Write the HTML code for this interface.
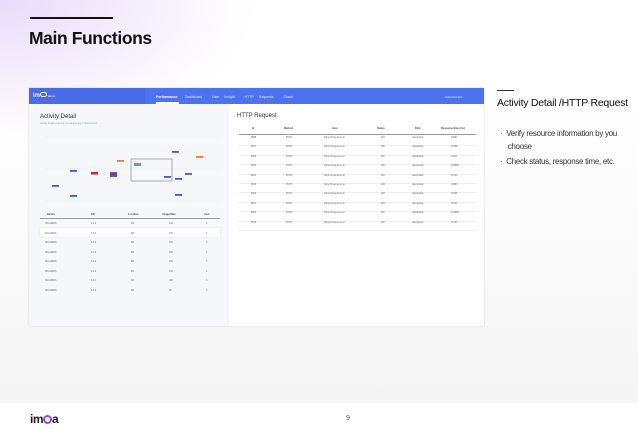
<!DOCTYPE html>
<html><head><meta charset="utf-8"><style>
*{margin:0;padding:0;box-sizing:border-box}
body{width:638px;height:442px;overflow:hidden;font-family:"Liberation Sans",sans-serif;position:relative;background:linear-gradient(#fff 0,#fff 100px,#f5f5f6 400px);}
.grad{position:absolute;left:0;top:0;width:260px;height:140px;background:radial-gradient(ellipse at 0 0,rgba(215,190,245,.55),rgba(255,255,255,0) 70%)}
.footer{position:absolute;left:0;top:403px;width:638px;height:39px;background:#fff}
.abs{position:absolute}
</style></head><body>
<div class="grad"></div>
<div class="abs" style="left:30px;top:17px;width:83px;height:2px;background:#111"></div>
<div class="abs" style="left:29px;top:28px;font-size:17.5px;font-weight:bold;color:#111;letter-spacing:-.4px">Main Functions</div>

<div class="abs" style="left:29px;top:88px;width:455px;height:238px;background:#fff;box-shadow:0 0 2px rgba(0,0,0,.15)">
 <div class="abs" style="left:0;top:0;width:455px;height:16px;background:#4d72ee"></div>
 <div class="abs" style="left:0;top:0;width:116px;height:16px;background:#4a6be6"></div>
 <div class="abs" style="left:4px;top:4px;font-size:6px;font-weight:bold;color:#fff">im<span style="display:inline-block;width:7px;height:5px;border:1.5px solid #fff;border-radius:3px"></span><span style="font-size:3px;font-weight:normal"> demo</span></div>
 <div class="abs" style="left:127px;top:7px;font-size:3.5px;color:#fff;font-weight:bold">Performance</div>
 <div class="abs" style="left:127px;top:14px;width:23px;height:1.5px;background:#fff"></div>
 <div class="abs" style="left:156px;top:7px;font-size:3.5px;color:#dfe6ff;word-spacing:4px">Dashboard&nbsp; User&nbsp;Insight&nbsp; HTTP&nbsp;Requests&nbsp; Crash</div>
 <div class="abs" style="left:416px;top:7px;font-size:3px;color:#dfe6ff">Administrator</div>
 <div class="abs" style="left:0;top:16px;width:200px;height:222px;background:#f5f7fb"></div>
 <div class="abs" style="left:11px;top:26px;font-size:6px;color:#333">Activity Detail</div>
 <div class="abs" style="left:11px;top:35px;font-size:2.3px;color:#7a9ae8">Activity Detail rendering of a sample app (7 devices/min)</div>
 <div class="abs" style="left:208px;top:25px;font-size:6px;color:#333">HTTP Request</div>
 <svg class="abs" style="left:10px;top:45px" width="182" height="75">
  <g stroke="#e6e9f0" stroke-width=".4"><line x1="5" y1="4" x2="180" y2="4"/><line x1="5" y1="36" x2="180" y2="36"/><line x1="5" y1="68" x2="180" y2="68"/></g>
  <rect x="13" y="52" width="7" height="1.8" fill="#3b5ce6"/>
  <rect x="31" y="37" width="7" height="1.8" fill="#3b5ce6"/>
  <rect x="31" y="62" width="7" height="1.8" fill="#3b5ce6"/>
  <rect x="52" y="39" width="7" height="2.5" fill="#e62020"/>
  <rect x="71" y="39" width="7" height="5" fill="#3b5ce6"/><rect x="71" y="40" width="7" height="1.8" fill="#e62020"/>
  <rect x="78" y="27" width="7" height="1.8" fill="#f07a3a"/>
  <rect x="95" y="30" width="7" height="3" fill="#6d8df0"/>
  <rect x="92" y="26" width="41" height="22" fill="none" stroke="#777" stroke-width=".6"/>
  <rect x="125" y="43" width="7" height="1.8" fill="#3b5ce6"/>
  <rect x="133" y="18" width="7" height="1.8" fill="#3b5ce6"/>
  <rect x="136" y="45" width="7" height="1.8" fill="#3b5ce6"/>
  <rect x="146" y="40" width="7" height="1.8" fill="#3b5ce6"/>
  <rect x="136" y="61" width="7" height="1.8" fill="#3b5ce6"/>
  <rect x="157" y="23" width="7" height="1.8" fill="#f07a3a"/>
 </svg>
 <div class="abs" style="left:11px;top:130px;width:180px;height:.6px;background:#999"></div>
 <div class="abs" style="left:11px;top:140px;width:180px;height:9px;background:#fff;box-shadow:0 0 2px rgba(0,0,0,.1)"></div>
 <div class="abs" style="left:0;top:125px;width:200px;font-size:2.5px;font-weight:bold;color:#444">
  <span class="abs" style="left:18px">Device</span><span class="abs" style="left:62px">OS</span><span class="abs" style="left:99px">Location</span><span class="abs" style="left:133px">Usage Rate</span><span class="abs" style="left:175px">User</span></div>
 <div class="abs" style="left:0;top:0;width:200px;font-size:2.3px;color:#666">
  <div class="abs" style="top:135px;width:200px"><span class="abs" style="left:16px">SM-G960S</span><span class="abs" style="left:62px">4.4.2</span><span class="abs" style="left:102px">KR</span><span class="abs" style="left:140px">100</span><span class="abs" style="left:177px">3</span></div>
  <div class="abs" style="top:144.5px;width:200px"><span class="abs" style="left:16px">SM-G960S</span><span class="abs" style="left:62px">4.4.2</span><span class="abs" style="left:102px">KR</span><span class="abs" style="left:140px">100</span><span class="abs" style="left:177px">3</span></div>
  <div class="abs" style="top:154px;width:200px"><span class="abs" style="left:16px">SM-G960S</span><span class="abs" style="left:62px">4.4.2</span><span class="abs" style="left:102px">KR</span><span class="abs" style="left:140px">100</span><span class="abs" style="left:177px">3</span></div>
  <div class="abs" style="top:163.5px;width:200px"><span class="abs" style="left:16px">SM-G960S</span><span class="abs" style="left:62px">4.4.2</span><span class="abs" style="left:102px">KR</span><span class="abs" style="left:140px">100</span><span class="abs" style="left:177px">3</span></div>
  <div class="abs" style="top:173px;width:200px"><span class="abs" style="left:16px">SM-G960S</span><span class="abs" style="left:62px">4.4.2</span><span class="abs" style="left:102px">KR</span><span class="abs" style="left:140px">100</span><span class="abs" style="left:177px">3</span></div>
  <div class="abs" style="top:182.5px;width:200px"><span class="abs" style="left:16px">SM-G960S</span><span class="abs" style="left:62px">4.4.2</span><span class="abs" style="left:102px">KR</span><span class="abs" style="left:140px">100</span><span class="abs" style="left:177px">3</span></div>
  <div class="abs" style="top:192px;width:200px"><span class="abs" style="left:16px">SM-G960S</span><span class="abs" style="left:62px">4.4.2</span><span class="abs" style="left:102px">KR</span><span class="abs" style="left:140px">100</span><span class="abs" style="left:177px">3</span></div>
  <div class="abs" style="top:201.5px;width:200px"><span class="abs" style="left:16px">SM-G960S</span><span class="abs" style="left:62px">4.4.2</span><span class="abs" style="left:102px">KR</span><span class="abs" style="left:140px">90</span><span class="abs" style="left:177px">3</span></div>
 </div>
 <div class="abs" style="left:210px;top:46px;width:237px;height:.6px;background:#999"></div>
 <div class="abs" style="left:210px;top:39px;width:237px;font-size:2.5px;font-weight:bold;color:#444">
  <span class="abs" style="left:13px">Id</span><span class="abs" style="left:45px">Method</span><span class="abs" style="left:93px">Host</span><span class="abs" style="left:138px">Status</span><span class="abs" style="left:176px">Path</span><span class="abs" style="left:202px">Response time (ms)</span></div>
</div>
<div class="abs" style="left:29px;top:0;width:0">
 <div class="abs" style="left:210px;top:137px;width:237px;font-size:2.3px;color:#666">
  <div style="height:9.4px;border-bottom:.4px solid #eee;position:relative"><span class="abs" style="left:12px">8888</span><span class="abs" style="left:47px">POST</span><span class="abs" style="left:85px">https://imqa.demo.io</span><span class="abs" style="left:142px">200</span><span class="abs" style="left:173px">/api/upload</span><span class="abs" style="left:212px">10987</span></div>
  <div style="height:9.4px;border-bottom:.4px solid #eee;position:relative"><span class="abs" style="left:12px">8877</span><span class="abs" style="left:47px">POST</span><span class="abs" style="left:85px">https://imqa.demo.io</span><span class="abs" style="left:142px">200</span><span class="abs" style="left:173px">/api/upload</span><span class="abs" style="left:212px">18765</span></div>
  <div style="height:9.4px;border-bottom:.4px solid #eee;position:relative"><span class="abs" style="left:12px">8866</span><span class="abs" style="left:47px">POST</span><span class="abs" style="left:85px">https://imqa.demo.io</span><span class="abs" style="left:142px">200</span><span class="abs" style="left:173px">/api/upload</span><span class="abs" style="left:212px">15111</span></div>
  <div style="height:9.4px;border-bottom:.4px solid #eee;position:relative"><span class="abs" style="left:12px">8855</span><span class="abs" style="left:47px">POST</span><span class="abs" style="left:85px">https://imqa.demo.io</span><span class="abs" style="left:142px">200</span><span class="abs" style="left:173px">/api/upload</span><span class="abs" style="left:212px">123888</span></div>
  <div style="height:9.4px;border-bottom:.4px solid #eee;position:relative"><span class="abs" style="left:12px">8844</span><span class="abs" style="left:47px">POST</span><span class="abs" style="left:85px">https://imqa.demo.io</span><span class="abs" style="left:142px">200</span><span class="abs" style="left:173px">/api/upload</span><span class="abs" style="left:212px">17144</span></div>
  <div style="height:9.4px;border-bottom:.4px solid #eee;position:relative"><span class="abs" style="left:12px">8833</span><span class="abs" style="left:47px">POST</span><span class="abs" style="left:85px">https://imqa.demo.io</span><span class="abs" style="left:142px">200</span><span class="abs" style="left:173px">/api/upload</span><span class="abs" style="left:212px">10987</span></div>
  <div style="height:9.4px;border-bottom:.4px solid #eee;position:relative"><span class="abs" style="left:12px">8822</span><span class="abs" style="left:47px">POST</span><span class="abs" style="left:85px">https://imqa.demo.io</span><span class="abs" style="left:142px">200</span><span class="abs" style="left:173px">/api/upload</span><span class="abs" style="left:212px">18765</span></div>
  <div style="height:9.4px;border-bottom:.4px solid #eee;position:relative"><span class="abs" style="left:12px">8811</span><span class="abs" style="left:47px">POST</span><span class="abs" style="left:85px">https://imqa.demo.io</span><span class="abs" style="left:142px">200</span><span class="abs" style="left:173px">/api/upload</span><span class="abs" style="left:212px">15111</span></div>
  <div style="height:9.4px;border-bottom:.4px solid #eee;position:relative"><span class="abs" style="left:12px">8800</span><span class="abs" style="left:47px">POST</span><span class="abs" style="left:85px">https://imqa.demo.io</span><span class="abs" style="left:142px">200</span><span class="abs" style="left:173px">/api/upload</span><span class="abs" style="left:212px">123888</span></div>
  <div style="height:9.4px;border-bottom:.4px solid #eee;position:relative"><span class="abs" style="left:12px">8799</span><span class="abs" style="left:47px">POST</span><span class="abs" style="left:85px">https://imqa.demo.io</span><span class="abs" style="left:142px">200</span><span class="abs" style="left:173px">/api/upload</span><span class="abs" style="left:212px">17144</span></div>
 </div>
</div>

<div class="abs" style="left:497px;top:90px;width:17px;height:1px;background:#333"></div>
<div class="abs" style="left:497px;top:97px;font-size:10.5px;color:#111;letter-spacing:-.25px">Activity Detail /HTTP Request</div>
<div class="abs" style="left:500px;top:127px;font-size:8px;color:#333;line-height:13px;width:130px;letter-spacing:-.3px">
 <div>·&nbsp; Verify resource information by you<br>&nbsp;&nbsp;&nbsp;&nbsp;choose</div>
 <div style="margin-top:2px">·&nbsp; Check status, response time, etc.</div>
</div>

<div class="footer"></div>
<div class="abs" style="left:30px;top:412px;font-size:12px;font-weight:bold;color:#222;letter-spacing:-.5px">im<span style="display:inline-block;width:9px;height:9px;border:2.5px solid #8a4df0;border-radius:50%;vertical-align:-1px"></span>a</div>
<div class="abs" style="left:346px;top:415px;font-size:7px;color:#555">9</div>
</body></html>
